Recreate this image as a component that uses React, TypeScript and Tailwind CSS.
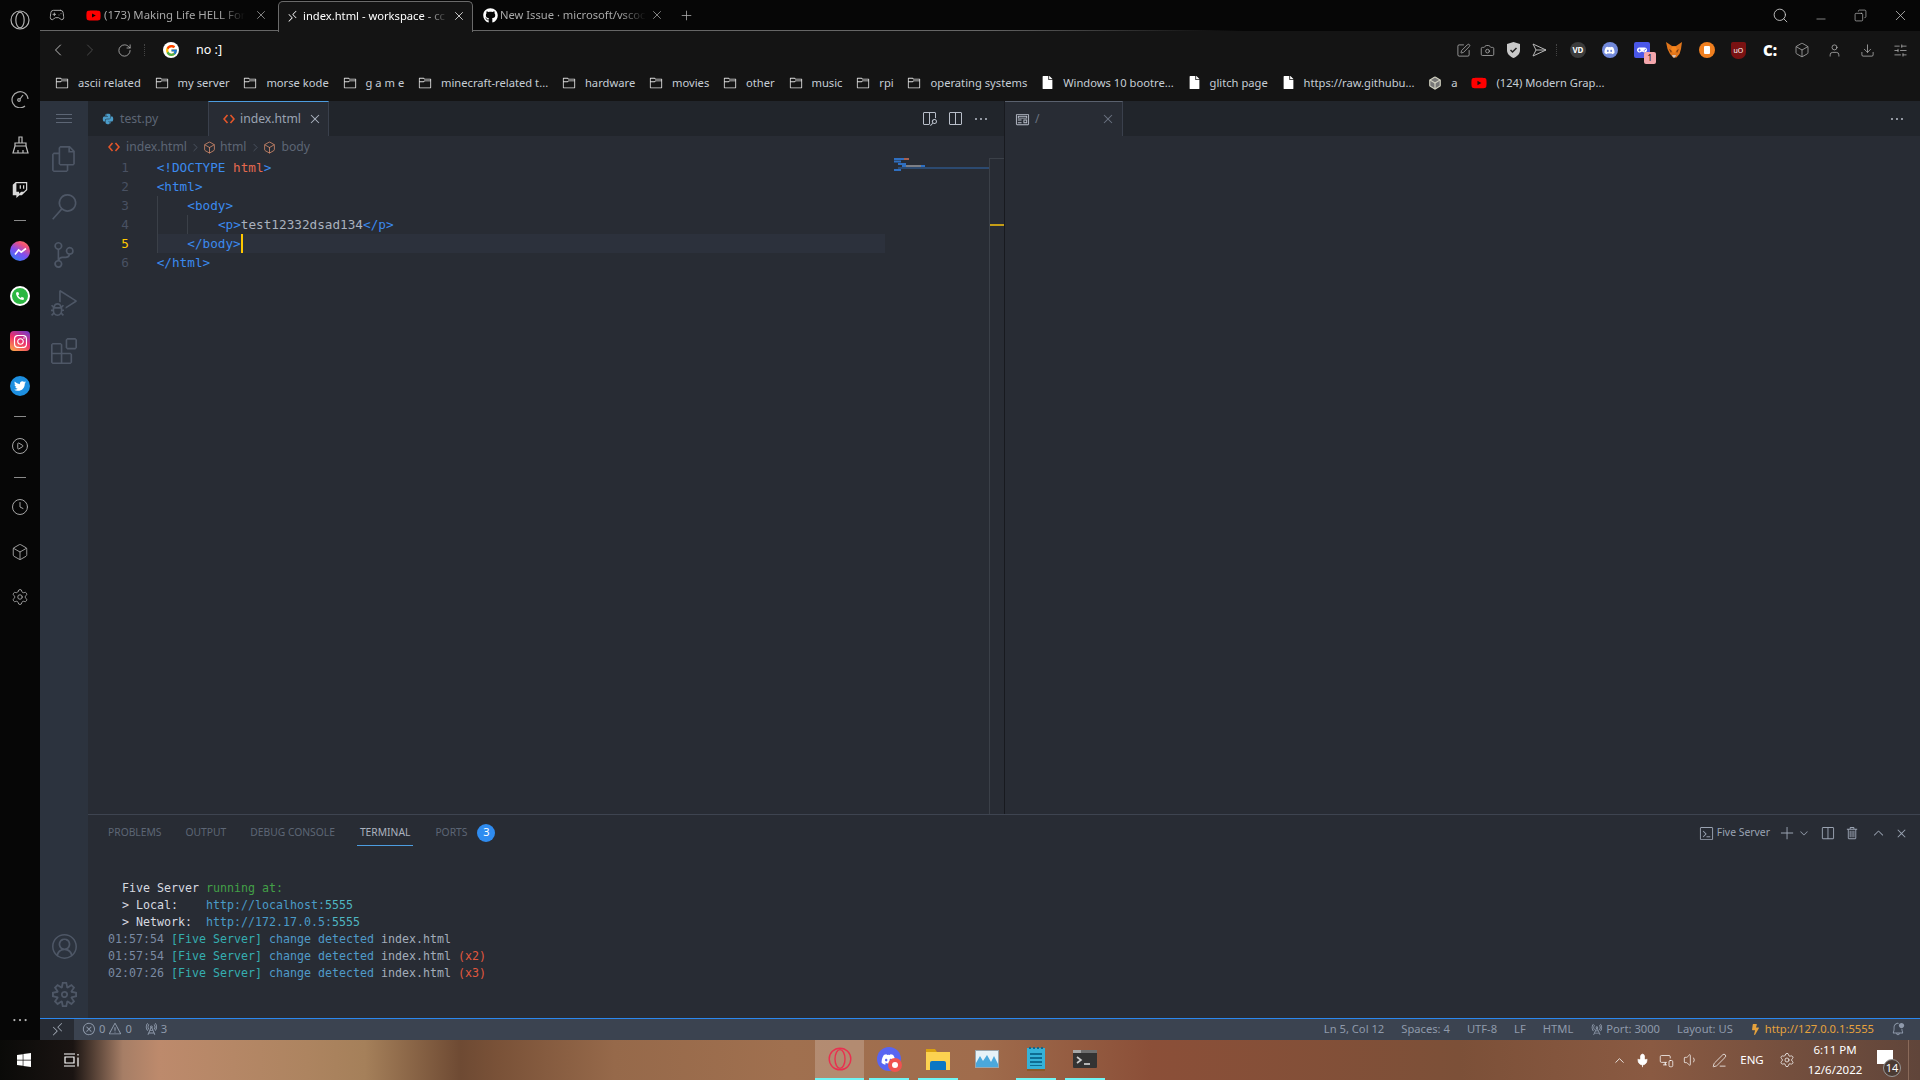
import React from "react";
import {
  Box,
  Camera,
  ChevronLeft,
  ChevronRight,
  Clock,
  Download,
  Gamepad2,
  Mic,
  MonitorSmartphone,
  PenLine,
  RotateCw,
  Search,
  Settings,
  SlidersHorizontal,
  SquarePen,
  User,
  Volume1,
  X,
  Plus,
  Minus,
  Copy,
  ChevronUp,
  CirclePlay,
} from "lucide-react";
import { FaGithub, FaDiscord, FaPython, FaTwitch, FaTwitter, FaInstagram, FaWindows, FaYoutube, FaGamepad, FaPhoneAlt, FaBolt, FaFile } from "react-icons/fa";
import { FcGoogle } from "react-icons/fc";
import {
  VscAccount,
  VscAdd,
  VscBellDot,
  VscChevronDown,
  VscChevronUp,
  VscClose,
  VscDebugAlt,
  VscEllipsis,
  VscError,
  VscExtensions,
  VscFiles,
  VscFolder,
  VscMenu,
  VscOpenPreview,
  VscPreview,
  VscRadioTower,
  VscRemote,
  VscSearch,
  VscSettingsGear,
  VscSourceControl,
  VscSplitHorizontal,
  VscTerminal,
  VscTrash,
  VscWarning,
} from "react-icons/vsc";

function OperaLogo({ size, color }: { size: number; color: string }) {
  return (
    <svg width={size} height={size} viewBox="0 0 24 24" fill="none" stroke={color} strokeWidth="1.4">
      <circle cx="12" cy="12" r="10.8" />
      <ellipse cx="12" cy="12" rx="5" ry="9.4" />
    </svg>
  );
}

function HtmlIcon() {
  return (
    <svg width="12" height="10" viewBox="0 0 12 10" fill="none" stroke="#e5562a" strokeWidth="1.6" className="shrink-0">
      <path d="M4.500 1 1 5l3.500 4M7.500 1 11 5 7.500 9" />
    </svg>
  );
}

function Divider() {
  return <div className="h-px w-3 bg-[#8a8a8a] shrink-0" />;
}

function Sidebar() {
  return (
    <div className="w-10 shrink-0 bg-[#060606] flex flex-col items-center text-[#a9a9a9]">
      <div className="mt-2 h-6 flex items-center">
        <OperaLogo size={20} color="#b5b5b5" />
      </div>
      <div className="mt-[55px] h-6 flex items-center">
        <svg width="18" height="18" viewBox="0 0 18 18" fill="none" stroke="currentColor" strokeWidth="1.200">
          <path d="M14 16A8 8 0 1 1 17 9" />
          <circle cx="8" cy="10" r="1.300" />
          <path d="M9 9l3-4" />
        </svg>
      </div>
      <div className="mt-[22px] h-6 flex items-center">
        <svg width="17" height="18" viewBox="0 0 17 18" fill="none" stroke="#bdbdbd" strokeWidth="1.200">
          <path d="M7 1h3v6H7zM3 7h11v3H3zM3 10l-2 7h15l-2-7M6 17v-3M11 17v-3" />
        </svg>
      </div>
      <div className="mt-[21px] h-6 flex items-center"><FaTwitch size={16} className="text-[#d8d8d8]" /></div>
      <div className="mt-[18px]"><Divider /></div>
      <div className="mt-[18px] h-6 flex items-center">
        <div className="w-5 h-5 rounded-full bg-[linear-gradient(30deg,#1e88f5,#7f4df0_45%,#f0507a_75%,#f98a5a)] flex items-center justify-center">
          <svg width="13" height="9" viewBox="0 0 13 9" fill="none" stroke="#fff" strokeWidth="1.6"><path d="M1 7.500 4.600 3l2.600 2.200L12 1.500" /></svg>
        </div>
      </div>
      <div className="mt-[21px] h-6 flex items-center">
        <div className="w-5 h-5 rounded-full bg-[#2cb742] border-2 border-white flex items-center justify-center">
          <FaPhoneAlt size={8} className="text-white" />
        </div>
      </div>
      <div className="mt-[21px] h-6 flex items-center">
        <div className="w-5 h-5 rounded-[4px] bg-[linear-gradient(30deg,#fdb347,#ee2f6a_50%,#6a3bd1)] flex items-center justify-center">
          <FaInstagram size={15} className="text-white" />
        </div>
      </div>
      <div className="mt-[21px] h-6 flex items-center">
        <div className="w-5 h-5 rounded-full bg-[#1d8fe0] flex items-center justify-center">
          <FaTwitter size={12} className="text-white" />
        </div>
      </div>
      <div className="mt-[18px]"><Divider /></div>
      <div className="mt-[17px] h-6 flex items-center"><CirclePlay size={18} strokeWidth={1.3} /></div>
      <div className="mt-[19px]"><Divider /></div>
      <div className="mt-[17px] h-6 flex items-center"><Clock size={18} strokeWidth={1.3} /></div>
      <div className="mt-[21px] h-6 flex items-center"><Box size={18} strokeWidth={1.2} /></div>
      <div className="mt-[21px] h-6 flex items-center"><Settings size={18} strokeWidth={1.2} /></div>
      <div className="mt-auto mb-2 h-6 flex items-center"><VscEllipsis size={18} className="text-[#b5b5b5]" /></div>
    </div>
  );
}

function TabStrip() {
  const fade = "[mask-image:linear-gradient(90deg,#000_82%,transparent)]";
  return (
    <div className="h-[31px] shrink-0 bg-[#060606] flex flex-col">
      <div className="h-[30px] flex items-stretch">
        <div className="w-[40px] flex items-center justify-center text-[#b5b5b5]">
          <Gamepad2 size={16} strokeWidth={1.4} className="ml-[-6px]" />
        </div>
        <div className="w-[198px] flex items-center pl-[6px] text-[#a8a8a8]">
          <FaYoutube size={15} className="text-[#f00] shrink-0" />
          <span className={`ml-[3px] w-[141px] shrink-0 whitespace-nowrap text-[11.4px] ${fade}`}>(173) Making Life HELL For</span>
          <X size={14} strokeWidth={1.3} className="ml-[9px] shrink-0" />
        </div>
        <div className="relative z-10 w-[195px] h-[31px] mt-px pb-[2px] bg-[#141414] border-x border-t border-[#6a6a6a] rounded-t-[5px] flex items-center pl-[7px] text-white">
          <VscRemote size={13} className="shrink-0" />
          <span className={`ml-[4px] w-[145px] shrink-0 whitespace-nowrap text-[11.2px] ${fade}`}>index.html - workspace - cc</span>
          <X size={14} strokeWidth={1.3} className="ml-[4px] shrink-0" />
        </div>
        <div className="w-[199px] flex items-center pl-[10px] text-[#a8a8a8]">
          <FaGithub size={15} className="text-white shrink-0" />
          <span className={`ml-[2px] w-[146px] shrink-0 whitespace-nowrap text-[11.2px] ${fade}`}>New Issue · microsoft/vscoc</span>
          <X size={14} strokeWidth={1.3} className="ml-[4px] shrink-0" />
        </div>
        <div className="flex items-center text-[#b5b5b5]">
          <Plus size={15} strokeWidth={1.2} className="ml-[7px]" />
        </div>
        <div className="ml-auto flex items-center text-[#c5c5c5]">
          <Search size={17} strokeWidth={1.3} />
          <Minus size={14} strokeWidth={1.1} className="ml-[25px] mt-2" />
          <Copy size={13} strokeWidth={1.2} className="ml-[26px] scale-x-[-1]" />
          <X size={17} strokeWidth={1.1} className="ml-[25px] mr-[11px]" />
        </div>
      </div>
      <div className="h-px bg-[linear-gradient(90deg,#666,#666_50%,transparent_64%)]" />
    </div>
  );
}

function Fox() {
  return (
    <svg width="18" height="18" viewBox="0 0 18 18">
      <path d="M1 1l6 4h4l6-4-1 7-1.500 5-3 3.500h-3L5 13 2.500 8z" fill="#e2761b" />
      <path d="M4 8l3 1.500L6 12zM14 8l-3 1.500L12 12z" fill="#763d16" />
      <path d="M7 14h4l-1 2.500H8z" fill="#d7c1b3" />
      <path d="M7 6h4l1 3-3 3-3-3z" fill="#f6851b" />
    </svg>
  );
}

function Toolbar() {
  return (
    <div className="h-[37px] shrink-0 bg-[#141414] flex items-center pt-px text-[#b8b8b8]">
      <ChevronLeft size={20} strokeWidth={1.2} className="ml-[8px]" />
      <ChevronRight size={20} strokeWidth={1.2} className="ml-[12px] text-[#4a4a4a]" />
      <RotateCw size={15} strokeWidth={1.3} className="ml-[17px]" />
      <div className="ml-[12px] h-3 w-px border-l border-dotted border-[#444]" />
      <div className="ml-[18px] w-4 h-4 rounded-full bg-white flex items-center justify-center">
        <FcGoogle size={13} />
      </div>
      <span className="ml-[17px] text-[12.5px] text-white">no :]</span>
      <div className="ml-auto flex items-center">
        <SquarePen size={15} strokeWidth={1.2} />
        <Camera size={15} strokeWidth={1.2} className="ml-[9px]" />
        <svg width="15" height="16" viewBox="0 0 15 16" className="ml-[11px]">
          <path d="M7.500 0 14 2v6c0 4-3 6.500-6.500 8C4 14.500 1 12 1 8V2z" fill="#c9c9c9" />
          <path d="M4.500 8l2 2 4-4" fill="none" stroke="#222" strokeWidth="1.500" />
        </svg>
        <svg width="15" height="14" viewBox="0 0 15 14" fill="none" stroke="currentColor" strokeWidth="1" className="ml-[11px]">
          <path d="M1 1l13 6-13 6 3-6zM4 7h10" />
        </svg>
        <div className="ml-[9px] h-3 w-px border-l border-dotted border-[#444]" />
        <div className="ml-[13px] w-4 h-4 rounded-full bg-[#3c3c3c] text-white text-[8px] font-bold leading-none flex items-center justify-center">VD</div>
        <div className="ml-[16px] w-4 h-4 rounded-full bg-[#7289da] flex items-center justify-center">
          <FaDiscord size={11} className="text-white" />
        </div>
        <div className="relative ml-[16px] w-4 h-4 rounded-[2px] bg-[#4a57e8] flex items-center justify-center">
          <FaGamepad size={10} className="text-white" />
          <span className="absolute left-[10px] top-[10px] w-3 h-3 rounded-[2px] bg-[#f4a6ac] text-[#222] text-[9px] leading-3 text-center">1</span>
        </div>
        <div className="ml-[15px]"><Fox /></div>
        <div className="ml-[16px] w-4 h-4 rounded-full bg-[#f07f1f] flex items-center justify-center">
          <div className="w-[6px] h-2 bg-white rounded-[1px]" />
        </div>
        <div className="ml-[16px] w-[15px] h-[17px] rounded-b-[7px] rounded-t-[2px] bg-[#7a1212] text-white text-[7px] leading-none flex items-center justify-center">uO</div>
        <span className="ml-[17px] text-white text-[15px] leading-none font-black">C:</span>
        <Box size={16} strokeWidth={1.1} className="ml-[17px]" />
        <User size={15} strokeWidth={1.2} className="ml-[17px]" />
        <Download size={15} strokeWidth={1.2} className="ml-[18px]" />
        <SlidersHorizontal size={15} strokeWidth={1.2} className="ml-[18px] mr-[12px]" />
      </div>
    </div>
  );
}

const bookmarks = [
  { kind: "folder", label: "ascii related" },
  { kind: "folder", label: "my server" },
  { kind: "folder", label: "morse kode" },
  { kind: "folder", label: "g a m e" },
  { kind: "folder", label: "minecraft-related t..." },
  { kind: "folder", label: "hardware" },
  { kind: "folder", label: "movies" },
  { kind: "folder", label: "other" },
  { kind: "folder", label: "music" },
  { kind: "folder", label: "rpi" },
  { kind: "folder", label: "operating systems" },
  { kind: "file", label: "Windows 10 bootre..." },
  { kind: "file", label: "glitch page" },
  { kind: "file", label: "https://raw.githubu..." },
  { kind: "box", label: "a" },
  { kind: "yt", label: "(124) Modern Grap..." },
];

function Bookmarks() {
  return (
    <div className="h-[33px] shrink-0 bg-[#141414] flex items-center pl-[15px] pb-[3px] gap-[13.800px] text-[11.2px] text-[#c6ced6] whitespace-nowrap">
      {bookmarks.map((b) => (
        <div key={b.label} className="flex items-center gap-[9px]">
          {b.kind === "folder" && <VscFolder size={14} className="text-[#dcdcdc]" />}
          {b.kind === "file" && <FaFile size={13} className="text-white" />}
          {b.kind === "box" && <Box size={14} className="text-[#d0d0c0]" fill="#777" />}
          {b.kind === "yt" && <FaYoutube size={16} className="text-[#f00]" />}
          <span>{b.label}</span>
        </div>
      ))}
    </div>
  );
}

function ActivityBar() {
  const items = [VscFiles, VscSearch, VscSourceControl, VscDebugAlt, VscExtensions];
  return (
    <div className="w-12 shrink-0 bg-[#2c333e] flex flex-col items-center text-[#4e5766]">
      <div className="h-[34px] flex items-center justify-center">
        <VscMenu size={16} className="text-[#5d6675]" />
      </div>
      {items.map((Icon, i) => (
        <div key={i} className="h-12 flex items-center justify-center">
          <Icon size={26} />
        </div>
      ))}
      <div className="mt-auto h-12 flex items-center justify-center"><VscAccount size={25} /></div>
      <div className="h-12 flex items-center justify-center"><VscSettingsGear size={25} /></div>
    </div>
  );
}

function Tag({ children }: { children: React.ReactNode }) {
  return <span className="text-[#3b8aee]">{children}</span>;
}

function Guide() {
  return <span className="w-[30.6px] h-full shrink-0 border-l border-[#3b4048]" />;
}

const codeLines: { guides: number; content: React.ReactNode; active?: boolean }[] = [
  { guides: 0, content: (<><Tag>&lt;!DOCTYPE </Tag><span className="text-[#e5694f]">html</span><Tag>&gt;</Tag></>) },
  { guides: 0, content: <Tag>&lt;html&gt;</Tag> },
  { guides: 1, content: <Tag>&lt;body&gt;</Tag> },
  { guides: 2, content: (<><Tag>&lt;p&gt;</Tag><span className="text-[#a9b1be]">test12332dsad134</span><Tag>&lt;/p&gt;</Tag></>) },
  { guides: 1, content: (<><Tag>&lt;/body&gt;</Tag><span className="w-[2px] h-[19px] bg-[#ffc800]" /></>), active: true },
  { guides: 0, content: <Tag>&lt;/html&gt;</Tag> },
];

function Minimap() {
  return (
    <svg width="96" height="16" viewBox="0 0 96 16" className="shrink-0">
      <rect x="1" y="0" width="10" height="2" fill="#2f6fc0" />
      <rect x="11" y="0" width="5" height="2" fill="#a8604e" />
      <rect x="1" y="2.500" width="7" height="2" fill="#2f6fc0" />
      <rect x="5" y="5" width="8" height="2" fill="#2f6fc0" />
      <rect x="9" y="7" width="4" height="2" fill="#2f6fc0" />
      <rect x="13" y="7" width="15" height="2" fill="#7d7f85" />
      <rect x="28" y="7" width="4" height="2" fill="#2f6fc0" />
      <rect x="5" y="9" width="91" height="2" fill="#2c4a70" />
      <rect x="1" y="11" width="7" height="2" fill="#2f6fc0" />
    </svg>
  );
}

function EditorPane() {
  return (
    <div className="w-[916px] shrink-0 flex flex-col">
      <div className="h-[35px] shrink-0 bg-[#21252b] flex">
        <div className="w-[120px] flex items-center pl-[14px] pt-px text-[#5d6675] text-[12.2px]">
          <FaPython size={12} className="text-[#4b9cc9]" />
          <span className="ml-[6px]">test.py</span>
        </div>
        <div className="w-[121px] bg-[#282c34] border-x border-[#3a404c] border-t border-t-[#4d9de0] flex items-center pl-[14px] text-[#9aa3b2] text-[12.2px]">
          <HtmlIcon />
          <span className="ml-[5px]">index.html</span>
          <VscClose size={16} className="ml-[6px] text-[#a9b1be]" />
        </div>
        <div className="ml-auto flex items-center text-[#b9bfca] mr-[15px] gap-[10px]">
          <VscOpenPreview size={16} />
          <VscSplitHorizontal size={16} />
          <VscEllipsis size={16} />
        </div>
      </div>
      <div className="h-[22px] shrink-0 bg-[#282c34] flex items-center pl-[20px] text-[12.2px] text-[#5d6675]">
        <HtmlIcon />
        <span className="ml-[6px]">index.html</span>
        <ChevronRight size={13} strokeWidth={1.2} className="ml-[2px]" />
        <Box size={13} strokeWidth={1.4} className="ml-[1px] text-[#e0916f]" />
        <span className="ml-[4px]">html</span>
        <ChevronRight size={13} strokeWidth={1.2} className="ml-[3px]" />
        <Box size={13} strokeWidth={1.4} className="ml-[1px] text-[#e0916f]" />
        <span className="ml-[5px]">body</span>
      </div>
      <div className="flex-1 bg-[#282c34] flex min-h-0">
        <div className="w-[41px] shrink-0 font-['DejaVu_Sans_Mono'] text-[12.7px] text-right text-[#495162]">
          {codeLines.map((l, i) => (
            <div key={i} className={`h-[19px] leading-[19px] ${l.active ? "text-[#ffc800]" : ""}`}>{i + 1}</div>
          ))}
        </div>
        <div className="ml-[27.7px] w-[728px] shrink-0 font-['DejaVu_Sans_Mono'] text-[12.7px]">
          {codeLines.map((l, i) => (
            <div key={i} className={`h-[19px] leading-[19px] flex whitespace-pre ${l.active ? "bg-[#2c313c]" : ""}`}>
              {l.guides > 0 && <Guide />}
              {l.guides > 1 && <Guide />}
              {l.content}
            </div>
          ))}
        </div>
        <div className="ml-[8px] w-[96px] shrink-0"><Minimap /></div>
        <div className="w-[15px] shrink-0 border-l border-t border-[#3b4048] pt-[65px]">
          <div className="h-[2px] bg-[#c49d17]" />
        </div>
      </div>
    </div>
  );
}

function PreviewPane() {
  return (
    <div className="flex-1 border-l border-[#181a1f] flex flex-col bg-[#282c34]">
      <div className="h-[35px] shrink-0 bg-[#21252b] flex">
        <div className="w-[118px] bg-[#282c34] border-r border-t border-r-[#3a404c] border-t-[#5a616e] flex items-center pl-[10px] text-[#6a7280] text-[12.2px]">
          <VscPreview size={15} className="text-[#b9bfca]" />
          <span className="ml-[5px]">/</span>
          <VscClose size={16} className="ml-[60px] text-[#6a7280]" />
        </div>
        <div className="ml-auto flex items-center mr-[15px] text-[#b9bfca]">
          <VscEllipsis size={16} />
        </div>
      </div>
    </div>
  );
}

function TerminalOutput() {
  const ts = "text-[#7a8aa3]";
  const brand = "text-[#35aeb0]";
  const msg = "text-[#4f9ac8]";
  const file = "text-[#a3acba]";
  const link = "text-[#4a9bc8]";
  const port = "text-[#4fb7c2]";
  const logs = [
    { time: "01:57:54", count: "" },
    { time: "01:57:54", count: "(x2)" },
    { time: "02:07:26", count: "(x3)" },
  ];
  return (
    <div className="mt-[34px] ml-5 font-['DejaVu_Sans_Mono'] text-[11.63px] leading-[17px] whitespace-pre text-[#d7dae0]">
      <div>  Five Server <span className="text-[#43a047]">running at:</span></div>
      <div>  &gt; Local:    <span className={link}>http://localhost:</span><span className={port}>5555</span></div>
      <div>  &gt; Network:  <span className={link}>http://172.17.0.5:</span><span className={port}>5555</span></div>
      {logs.map((l, i) => (
        <div key={i}>
          <span className={ts}>{l.time}</span> <span className={brand}>[Five Server]</span> <span className={msg}>change detected</span> <span className={file}>index.html</span>
          {l.count && <span className="text-[#e2583e]"> {l.count}</span>}
        </div>
      ))}
    </div>
  );
}

function Panel() {
  return (
    <div className="h-[204px] shrink-0 bg-[#282c34] border-t border-[#3e4450] flex flex-col">
      <div className="h-[31px] shrink-0 flex items-stretch text-[10.3px] text-[#5d6675]">
        <div className="ml-5 pt-[5px] flex items-center">PROBLEMS</div>
        <div className="ml-6 pt-[5px] flex items-center">OUTPUT</div>
        <div className="ml-6 pt-[5px] flex items-center">DEBUG CONSOLE</div>
        <div className="ml-[22px] px-[3px] pt-[5px] flex items-center text-[#abb2bf] border-b border-[#4d9de0]">TERMINAL</div>
        <div className="ml-[22px] pt-[5px] flex items-center">PORTS</div>
        <div className="ml-[10px] mt-[4px] self-center w-[18px] h-[18px] rounded-full bg-[#2f8cf0] text-white text-[11px] flex items-center justify-center">3</div>
        <div className="ml-auto pt-[5px] flex items-center text-[#9aa3b2] text-[10.4px] mr-[11px]">
          <VscTerminal size={15} />
          <span className="ml-[3px]">Five Server</span>
          <VscAdd size={15} className="ml-[10px]" />
          <VscChevronDown size={12} className="ml-[3px]" />
          <VscSplitHorizontal size={15} className="ml-[10px]" />
          <VscTrash size={15} className="ml-[10px]" />
          <VscChevronUp size={15} className="ml-[11px]" />
          <VscClose size={15} className="ml-[8px]" />
        </div>
      </div>
      <TerminalOutput />
    </div>
  );
}

function StatusBar() {
  return (
    <div className="h-[22px] shrink-0 bg-[#3b4350] border-t border-[#2b88f0] flex items-center text-[11.2px] text-[#8f9aab]">
      <div className="w-[34px] h-full bg-[#282c34] flex items-center justify-center">
        <VscRemote size={15} className="text-[#a0a7b3]" />
      </div>
      <div className="ml-[8px] flex items-center">
        <VscError size={14} />
        <span className="ml-[3px]">0</span>
        <VscWarning size={14} className="ml-[3px]" />
        <span className="ml-[3px]">0</span>
        <VscRadioTower size={14} className="ml-[12px]" />
        <span className="ml-[3px]">3</span>
      </div>
      <div className="ml-auto flex items-center gap-[17px] mr-[15px]">
        <span>Ln 5, Col 12</span>
        <span>Spaces: 4</span>
        <span>UTF-8</span>
        <span>LF</span>
        <span>HTML</span>
        <span className="flex items-center gap-[3px]"><VscRadioTower size={13} />Port: 3000</span>
        <span>Layout: US</span>
        <span className="flex items-center gap-[4px] text-[#e6a23c]"><FaBolt size={11} />http://127.0.0.1:5555</span>
        <VscBellDot size={14} />
      </div>
    </div>
  );
}

function VsCode() {
  return (
    <div className="flex-1 flex flex-col min-h-0">
      <div className="flex-1 flex min-h-0">
        <ActivityBar />
        <div className="flex-1 flex flex-col min-w-0">
          <div className="flex-1 flex min-h-0">
            <EditorPane />
            <PreviewPane />
          </div>
          <Panel />
        </div>
      </div>
      <StatusBar />
    </div>
  );
}

function TaskItem({ open, active, children }: { open?: boolean; active?: boolean; children: React.ReactNode }) {
  return (
    <div className={`w-[49px] h-full flex flex-col items-center ${active ? "bg-white/20" : ""}`}>
      <div className="flex-1 flex items-center justify-center">{children}</div>
      <div className={`h-[2px] ${active ? "w-full" : "w-10"} ${open ? "bg-[#6ff5f5]" : ""}`} />
    </div>
  );
}

function Taskbar() {
  return (
    <div className="h-10 shrink-0 flex items-stretch text-white bg-[linear-gradient(90deg,#0a0a08_0%,#1a1412_3.800%,#a67e66_6.400%,#bd8a6c_8.300%,#ad8460_16%,#a5805a_19%,#6e4a33_24%,#7a5238_26%,#96694a_32%,#a0704f_41%,#a06c4c_51%,#8b4f38_60%,#7c5038_76%,#8a5a42_86%,#60453a_100%)]">
      <div className="w-12 flex items-center justify-center"><FaWindows size={16} /></div>
      <div className="w-12 flex items-center justify-center">
        <svg width="16" height="14" viewBox="0 0 16 14" fill="none" stroke="#fff" strokeWidth="1.200">
          <path d="M0 1h11M0 13h11M1 4h9v6H1zM14 1v1.500M14 4.500v9" />
        </svg>
      </div>
      <div className="ml-[719px] flex items-stretch">
        <TaskItem open active><OperaLogo size={24} color="#e9304f" /></TaskItem>
        <TaskItem open>
          <div className="relative w-6 h-6 rounded-full bg-[#5865f2] flex items-center justify-center">
            <FaDiscord size={15} />
            <span className="absolute left-[11px] top-[11px] w-[14px] h-[14px] rounded-full bg-[#ef5350] border-[3px] border-[#ef5350] flex items-center justify-center">
              <span className="w-[6px] h-[6px] rounded-full bg-white" />
            </span>
          </div>
        </TaskItem>
        <TaskItem open>
          <svg width="24" height="22" viewBox="0 0 24 22">
            <path d="M0 1h9l2 3h13v17H0z" fill="#d9a110" />
            <path d="M0 4h24v18H0z" fill="#fcd250" />
            <path d="M4 15a2 2 0 0 1 2-2h12a2 2 0 0 1 2 2v7H4z" fill="#0b76c4" />
          </svg>
        </TaskItem>
        <TaskItem>
          <svg width="24" height="18" viewBox="0 0 24 18">
            <rect width="24" height="18" fill="#9aa6ad" />
            <rect x="1" y="1" width="22" height="16" fill="#e6f2f8" />
            <path d="M1 13 5 6l3 5 4-6 4 7 3-6 4 8v3H1z" fill="#4aa8dc" />
          </svg>
        </TaskItem>
        <TaskItem open>
          <svg width="18" height="24" viewBox="0 0 18 24">
            <rect y="1" width="18" height="21" fill="#35b2d8" />
            <rect y="22" width="18" height="2" fill="#8a5a2a" />
            <path d="M2 0h2v2H2zM6 0h2v2H6zM10 0h2v2h-2zM14 0h2v2h-2z" fill="#13678a" />
            <path d="M3 6h12v2H3zM3 10h12v2H3zM3 14h12v2H3zM3 18h12v1H3z" fill="#0e6c92" />
          </svg>
        </TaskItem>
        <TaskItem open>
          <svg width="24" height="18" viewBox="0 0 24 18" fill="none">
            <rect width="24" height="18" rx="1" fill="#333" />
            <rect width="24" height="3" fill="#6e6e6e" />
            <rect width="8" height="3" fill="#a8a8a8" />
            <path d="M4 7l4 3-4 3" stroke="#cfcfcf" strokeWidth="1.600" />
            <path d="M11 14h6" stroke="#eee" strokeWidth="1.400" />
          </svg>
        </TaskItem>
      </div>
      <div className="ml-auto flex items-stretch">
        <div className="w-6 flex items-center justify-center"><ChevronUp size={15} strokeWidth={1.3} /></div>
        <div className="w-[23px] flex items-center justify-center"><Mic size={15} fill="#fff" strokeWidth={1.3} /></div>
        <div className="w-6 flex items-center justify-center"><MonitorSmartphone size={15} strokeWidth={1.2} /></div>
        <div className="w-[26px] flex items-center justify-center"><Volume1 size={16} strokeWidth={1.1} /></div>
        <div className="w-[30px] flex items-center justify-center"><PenLine size={15} strokeWidth={1.2} /></div>
        <div className="w-9 flex items-center justify-center text-[11.5px]">ENG</div>
        <div className="w-[34px] flex items-center justify-center"><Settings size={16} strokeWidth={1.1} /></div>
        <div className="w-[62px] flex flex-col items-center justify-center text-[11.5px] leading-[20px]">
          <span>6:11 PM</span>
          <span>12/6/2022</span>
        </div>
        <div className="w-[42px] flex items-center justify-center">
          <div className="relative w-4 h-[14px] bg-white mb-[6px] ml-[-4px]">
            <span className="absolute left-[6px] top-[9px] w-[18px] h-[18px] rounded-full bg-[#4a3a32] border border-[#999] text-[11px] leading-[16px] text-center">14</span>
          </div>
        </div>
        <div className="w-3 border-l border-[#8a6a5a]" />
      </div>
    </div>
  );
}

export default function App() {
  return (
    <div className="w-[1920px] h-[1080px] overflow-hidden flex flex-col font-['Noto_Sans',sans-serif]">
      <div className="flex-1 flex min-h-0">
        <Sidebar />
        <div className="flex-1 flex flex-col min-w-0">
          <TabStrip />
          <Toolbar />
          <Bookmarks />
          <VsCode />
        </div>
      </div>
      <Taskbar />
    </div>
  );
}
